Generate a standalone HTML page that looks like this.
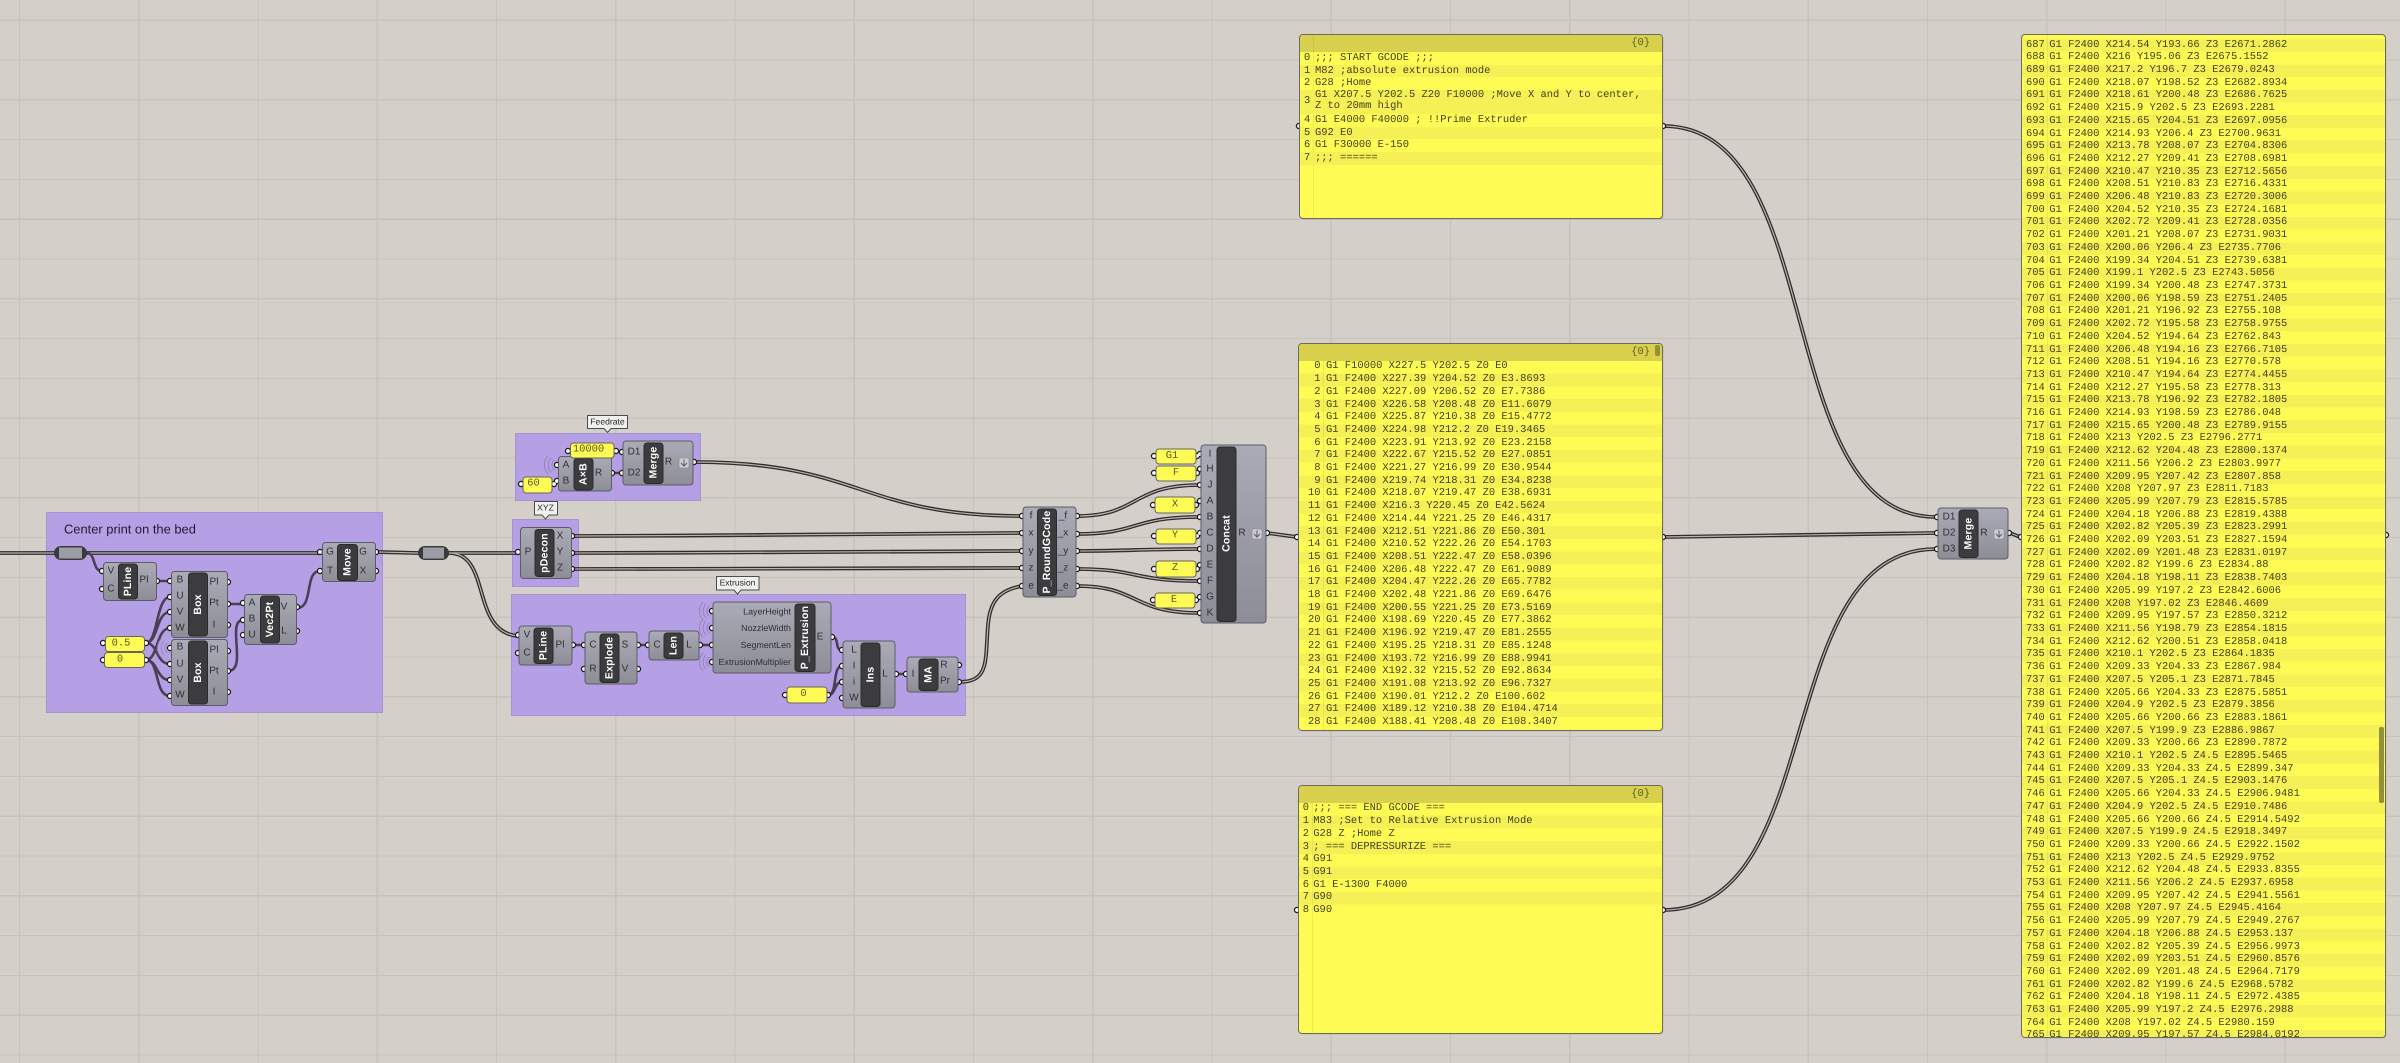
<!DOCTYPE html>
<html>
<head>
<meta charset="utf-8">
<style>
html,body{margin:0;padding:0;width:2400px;height:1063px;overflow:hidden;background:#d4d0c9}
#all{position:absolute;left:0;top:0;width:2400px;height:1063px;overflow:hidden;filter:blur(.3px);text-rendering:geometricPrecision}
.gv,.gh{position:absolute}
.gv{left:-99px;top:0;width:2600px;height:1063px;background:repeating-linear-gradient(90deg,transparent 0 118px,#c7c3bc 118px 119.25px)}
.gh{left:0;top:-18.6px;width:2400px;height:1100px;background:repeating-linear-gradient(180deg,transparent 0 38.6px,#c7c3bc 38.6px 39.8px)}
svg{position:absolute;left:0;top:0}
.grp{fill:#b39ae8;fill-opacity:.9;stroke:#a694cc;stroke-width:1}
.c{fill:url(#cg);stroke:#5c5c66;stroke-width:1}
.b{fill:#3c3c3e;stroke:#2a2a2c;stroke-width:1}
.n{font:bold 10.5px "Liberation Sans",sans-serif;fill:#fff;text-anchor:middle;dominant-baseline:central;letter-spacing:.2px}
.l{font:10px "Liberation Sans",sans-serif;fill:#2e2e32;text-anchor:middle;dominant-baseline:central}
.le{font:8.9px "Liberation Sans",sans-serif;fill:#2e2e32;text-anchor:end;dominant-baseline:central}
.y{fill:#fffb55;stroke:#66665a;stroke-width:1}
.m{font:10.45px "Liberation Mono",monospace;fill:#5c5c24;text-anchor:middle;dominant-baseline:central}
.tg{fill:#f0f0ee;stroke:#4c4c4c;stroke-width:1}
.tt{font:8.6px "Liberation Sans",sans-serif;fill:#2a2a2a;text-anchor:middle;dominant-baseline:central}
.btn{fill:#cbcbd0;stroke:#85858d;stroke-width:.6}
.p{position:absolute;background:#fffb55;box-shadow:0 0 0 1px #6b6b60,1px 1px 1px rgba(0,0,0,.3);border-radius:3px;overflow:hidden;font:10.45px/12.708px "Liberation Mono",monospace;color:#43431a}
.h{position:absolute;left:0;top:0;right:0;height:17px;background:#d9d04e}
.z{position:absolute;right:12px;top:2px;color:#5c5c24}
.s{position:absolute;left:0;right:0;bottom:0;background:repeating-linear-gradient(180deg,#fffb55 0 12.708px,#f5f055 12.708px 25.416px)}
.s2{position:absolute;left:0;right:0;bottom:0;background:repeating-linear-gradient(180deg,#f5f055 0 12.708px,#fffb55 12.708px 25.416px)}
.gut{position:absolute;left:0;top:0;bottom:0;border-right:1px solid rgba(120,120,40,.12)}
pre{position:absolute;margin:0;font:inherit;white-space:pre}
.r{position:relative;height:12.7px;white-space:pre}
.r b{position:absolute;font-weight:normal;left:4px;top:0}
.r i{position:absolute;font-style:normal;left:15px;top:0}
.d{background:#f5f055}
.sb{position:absolute;background:#94903a;border-radius:2px}
</style>
</head>
<body>
<div id="all">
<div class="gv"></div>
<div class="gh"></div>
<svg width="2400" height="1063" viewBox="0 0 2400 1063">
<defs>
<linearGradient id="cg" x1="0" y1="0" x2="0" y2="1"><stop offset="0" stop-color="#ababb7"/><stop offset="1" stop-color="#8d8d97"/></linearGradient>
<g id="w1">
<path d="M0 553H54"/><path d="M87 553H320"/><path d="M377 552L418 553"/><path d="M449 553H518"/>
<path d="M449 553C492 553 470 632 518 636"/>
<path d="M573 536C720 536 860 533 1022 533"/><path d="M573 553C720 553 860 551 1022 551"/><path d="M573 569C720 569 860 568 1022 568"/>
<path d="M694 462C860 462 860 516 1022 516"/>
<path d="M959 682C990 682 985 660 988 625C990 600 1000 590 1022 586"/>
<path d="M1077 516C1140 516 1130 485 1200 485"/><path d="M1077 534C1140 534 1130 517 1200 517"/><path d="M1077 551C1120 551 1150 549 1200 549"/>
<path d="M1077 569C1140 569 1130 581 1200 581"/><path d="M1077 586C1140 586 1130 613 1200 613"/>
<path d="M1267 533L1297 537"/>
<path d="M1663 126C1830 126 1770 517 1936 517"/><path d="M1663 537L1936 533"/><path d="M1663 910C1830 910 1770 549 1936 549"/>
<path d="M2010 533L2020 537"/>
</g>
<g id="w2">
<path d="M87 553C96 553 92 571 102 571"/>
<path d="M157 581H170"/>
<path d="M146 643C158 643 156 597 170 597"/><path d="M146 643C158 643 156 612 170 612"/><path d="M146 660C158 660 156 628 170 628"/>
<path d="M146 643C158 643 156 664 170 664"/><path d="M146 660C158 660 156 680 170 680"/><path d="M146 660C160 660 154 696 170 696"/>
<path d="M228 604H243"/><path d="M228 671C248 671 226 620 243 620"/><path d="M297 608C314 608 304 571 320 571"/>
<path d="M553 484L557 481"/><path d="M615 451L622 452"/><path d="M612 473H622"/>
<path d="M573 645H584"/><path d="M638 645H648"/><path d="M700 645H712"/><path d="M832 637C840 637 834 650 842 650"/>
<path d="M828 695C838 695 832 666 842 666"/><path d="M828 695C836 695 834 682 842 682"/><path d="M896 674H906"/>
</g>
<path id="k" d="M102 571h0M102 589h0M157 581h0M170 581h0M170 597h0M170 612h0M170 628h0M170 648h0M170 664h0M170 680h0M170 696h0M228 582h0M228 604h0M228 625h0M228 651h0M228 671h0M228 692h0M243 603h0M243 620h0M243 635h0M297 607h0M297 631h0M320 552h0M320 571h0M376 552h0M376 571h0M103 643h0M103 660h0M146 643h0M146 660h0M521 484h0M554 484h0M557 465h0M557 481h0M568 451h0M616 451h0M612 473h0M622 452h0M622 473h0M694 462h0M518 552h0M572 536h0M572 553h0M572 569h0M518 635h0M518 653h0M573 645h0M584 645h0M584 669h0M638 645h0M638 669h0M648 645h0M700 645h0M712 611h0M712 628h0M712 645h0M712 662h0M832 637h0M842 650h0M842 666h0M842 682h0M842 698h0M785 695h0M828 695h0M896 674h0M906 674h0M959 665h0M959 682h0M1022 516h0M1022 533h0M1022 551h0M1022 568h0M1022 586h0M1077 516h0M1077 534h0M1077 551h0M1077 569h0M1077 586h0M1154 456h0M1154 473h0M1197 456h0M1197 473h0M1153 505h0M1196 505h0M1154 536h0M1197 536h0M1154 569h0M1197 569h0M1153 600h0M1196 600h0M1200 454h0M1200 469h0M1200 485h0M1200 501h0M1200 517h0M1200 533h0M1200 549h0M1200 565h0M1200 581h0M1200 597h0M1200 613h0M1267 533h0M1297 537h0M1299 126h0M1663 126h0M1663 537h0M1297 910h0M1663 910h0M1937 517h0M1937 533h0M1937 549h0M2009 533h0M2021 537h0M2386 535h0"/>
</defs>

<!-- groups -->
<rect class="grp" x="46.5" y="512.5" width="336" height="200"/>
<rect class="grp" x="515.5" y="433.5" width="185" height="67"/>
<rect class="grp" x="512.5" y="519.5" width="66" height="67"/>
<rect class="grp" x="511.5" y="594.5" width="454" height="121"/>
<text x="64" y="529" style="font:12.9px 'Liberation Sans',sans-serif;fill:#221a30;dominant-baseline:central">Center print on the bed</text>

<!-- tags -->
<path class="tg" d="M587.5 415.5H627.5V428.5H611L607.5 432.5L604 428.5H587.5Z"/><text class="tt" x="607.5" y="421.5">Feedrate</text>
<path class="tg" d="M534.5 501.5H557.5V515H549L545.5 519L542 515H534.5Z"/><text class="tt" x="545.5" y="507.5">XYZ</text>
<path class="tg" d="M716.5 576.5H759V590H741L737.5 594L734 590H716.5Z"/><text class="tt" x="737.5" y="582.5">Extrusion</text>

<!-- wires -->
<g fill="none" stroke-linecap="round">
<use href="#w1" stroke="#2e2e2e" stroke-width="3.8"/>
<use href="#w1" stroke="#b8b6ad" stroke-width="1.2"/>
<use href="#w2" stroke="#4a4056" stroke-width="2.6"/>
<use href="#k" stroke="#1e1e1e" stroke-width="6.4"/>
<use href="#k" stroke="#fff" stroke-width="3.8"/>
<!-- hidden-wire arcs -->
<g stroke="#8f7fb0" stroke-width=".8">
<path d="M554 460a7 7 0 0 0 0 10M551 458a10 10 0 0 0 0 14M548 456a13 13 0 0 0 0 18"/>
<path d="M709 606a7 7 0 0 0 0 10M706 604a10 10 0 0 0 0 14M703 602a13 13 0 0 0 0 18"/>
<path d="M709 623a7 7 0 0 0 0 10M706 621a10 10 0 0 0 0 14M703 619a13 13 0 0 0 0 18"/>
<path d="M709 657a7 7 0 0 0 0 10M706 655a10 10 0 0 0 0 14M703 653a13 13 0 0 0 0 18"/>
<path d="M167 643a7 7 0 0 0 0 10M164 641a10 10 0 0 0 0 14M161 639a13 13 0 0 0 0 18"/>
</g>
</g>

<!-- relays -->
<rect x="54" y="546" width="33" height="14" rx="7" fill="#3a3a3c"/><rect x="59" y="547.5" width="23" height="11" fill="#9c9ca6"/>
<rect x="418" y="546" width="31" height="14" rx="7" fill="#3a3a3c"/><rect x="423" y="547.5" width="21" height="11" fill="#9c9ca6"/>

<!-- PLine 1 -->
<rect class="c" x="103.5" y="562.5" width="53" height="38" rx="3"/><rect class="b" x="118.5" y="564" width="19" height="35" rx="3"/>
<text class="n" transform="translate(128 581.5) rotate(-90)">PLine</text>
<text class="l" x="111" y="571">V</text><text class="l" x="111" y="589">C</text><text class="l" x="144" y="580">Pl</text>
<!-- Box 1 -->
<rect class="c" x="171.5" y="571.5" width="56" height="66" rx="3"/><rect class="b" x="188.5" y="573" width="19" height="63" rx="3"/>
<text class="n" transform="translate(198 604.5) rotate(-90)">Box</text>
<text class="l" x="180" y="580">B</text><text class="l" x="180" y="596">U</text><text class="l" x="180" y="612">V</text><text class="l" x="180" y="628">W</text>
<text class="l" x="214" y="582">Pl</text><text class="l" x="214" y="603">Pt</text><text class="l" x="214" y="625">I</text>
<!-- Box 2 -->
<rect class="c" x="171.5" y="639.5" width="56" height="66" rx="3"/><rect class="b" x="188.5" y="641" width="19" height="63" rx="3"/>
<text class="n" transform="translate(198 672.5) rotate(-90)">Box</text>
<text class="l" x="180" y="647">B</text><text class="l" x="180" y="664">U</text><text class="l" x="180" y="680">V</text><text class="l" x="180" y="695">W</text>
<text class="l" x="214" y="650">Pl</text><text class="l" x="214" y="671">Pt</text><text class="l" x="214" y="692">I</text>
<!-- Vec2Pt -->
<rect class="c" x="244.5" y="594.5" width="52" height="50" rx="3"/><rect class="b" x="260.5" y="596" width="19" height="47" rx="3"/>
<text class="n" transform="translate(270 619.5) rotate(-90)">Vec2Pt</text>
<text class="l" x="252" y="603">A</text><text class="l" x="252" y="619">B</text><text class="l" x="252" y="635">U</text>
<text class="l" x="284" y="607">V</text><text class="l" x="284" y="631">L</text>
<!-- Move -->
<rect class="c" x="322.5" y="542.5" width="53" height="39" rx="3"/><rect class="b" x="337.5" y="544.5" width="20" height="36" rx="3"/>
<text class="n" transform="translate(347.5 562) rotate(-90)">Move</text>
<text class="l" x="330" y="552">G</text><text class="l" x="330" y="571">T</text><text class="l" x="363" y="552">G</text><text class="l" x="363" y="571">X</text>
<!-- small panels left -->
<rect class="y" x="105.5" y="636.5" width="39" height="15" rx="3"/><text class="m" x="121" y="643.5">0.5</text>
<rect class="y" x="104.5" y="652.5" width="40" height="15" rx="3"/><text class="m" x="120" y="659.5">0</text>

<!-- AxB -->
<rect class="c" x="558.5" y="456.5" width="53" height="34.5" rx="3"/><rect class="b" x="574" y="458.5" width="19" height="31.5" rx="3"/>
<text class="n" transform="translate(583.5 474) rotate(-90)">A×B</text>
<text class="l" x="566" y="465">A</text><text class="l" x="566" y="481">B</text><text class="l" x="598.5" y="473">R</text>
<rect class="y" x="570.5" y="443" width="43.5" height="15" rx="3"/><text class="m" x="588.5" y="449.5">10000</text>
<rect class="y" x="523" y="477" width="29" height="16" rx="3"/><text class="m" x="533.5" y="483.5">60</text>
<!-- Merge 1 -->
<rect class="c" x="623" y="441" width="70" height="44" rx="3"/><rect class="b" x="644" y="443" width="19" height="40.5" rx="3"/>
<text class="n" transform="translate(653.5 462.5) rotate(-90)">Merge</text>
<text class="l" x="634" y="452">D1</text><text class="l" x="634" y="473">D2</text><text class="l" x="668.5" y="462">R</text>
<rect class="btn" x="679" y="458" width="10" height="10" rx="2"/><path d="M684 459.5V466M681 463l3 3 3-3" fill="none" stroke="#5a5a60" stroke-width="1"/>
<!-- pDecon -->
<rect class="c" x="520.5" y="527.5" width="51" height="51" rx="3"/><rect class="b" x="535" y="529.5" width="19" height="47" rx="3"/>
<text class="n" transform="translate(544.5 553) rotate(-90)">pDecon</text>
<text class="l" x="528" y="552">P</text><text class="l" x="560" y="536">X</text><text class="l" x="560" y="552">Y</text><text class="l" x="560" y="568">Z</text>
<!-- PLine 2 -->
<rect class="c" x="519" y="626" width="53" height="39" rx="3"/><rect class="b" x="534" y="628" width="19" height="35.5" rx="3"/>
<text class="n" transform="translate(543.5 645.5) rotate(-90)">PLine</text>
<text class="l" x="527" y="635">V</text><text class="l" x="527" y="653">C</text><text class="l" x="560" y="645">Pl</text>
<!-- Explode -->
<rect class="c" x="585" y="632" width="52" height="52" rx="3"/><rect class="b" x="600" y="634" width="19" height="48.5" rx="3"/>
<text class="n" transform="translate(609.5 658) rotate(-90)">Explode</text>
<text class="l" x="593" y="645">C</text><text class="l" x="593" y="669">R</text><text class="l" x="625" y="645">S</text><text class="l" x="625" y="669">V</text>
<!-- Len -->
<rect class="c" x="649" y="631" width="50" height="29" rx="3"/><rect class="b" x="664" y="633" width="19" height="25.5" rx="3"/>
<text class="n" transform="translate(673.5 645.5) rotate(-90)">Len</text>
<text class="l" x="657" y="645">C</text><text class="l" x="689" y="645">L</text>
<!-- P_Extrusion -->
<rect class="c" x="713" y="602" width="118" height="71" rx="3"/><rect class="b" x="795" y="604" width="20" height="67.5" rx="3"/>
<text class="n" transform="translate(805 637.5) rotate(-90)">P_Extrusion</text>
<text class="le" x="791" y="611.5">LayerHeight</text><text class="le" x="791" y="628">NozzleWidth</text><text class="le" x="791" y="645">SegmentLen</text><text class="le" x="791" y="662">ExtrusionMultiplier</text>
<text class="l" x="820" y="637">E</text>
<!-- Ins -->
<rect class="c" x="843" y="641" width="52" height="67" rx="3"/><rect class="b" x="861" y="643" width="19" height="63.5" rx="3"/>
<text class="n" transform="translate(870.5 674.5) rotate(-90)">Ins</text>
<text class="l" x="854" y="650">L</text><text class="l" x="854" y="666">I</text><text class="l" x="854" y="682">i</text><text class="l" x="854" y="698">W</text><text class="l" x="885" y="674">L</text>
<rect class="y" x="787" y="687" width="40" height="16" rx="3"/><text class="m" x="803.5" y="694">0</text>
<!-- MA -->
<rect class="c" x="907" y="657" width="51" height="35" rx="3"/><rect class="b" x="919" y="659" width="19" height="31.5" rx="3"/>
<text class="n" transform="translate(928.5 674.5) rotate(-90)">MA</text>
<text class="l" x="913" y="674">I</text><text class="l" x="944" y="665">R</text><text class="l" x="945" y="681">Pr</text>

<!-- P_RoundGCode -->
<rect class="c" x="1023" y="507" width="53" height="90" rx="3"/><rect class="b" x="1037.5" y="509" width="19" height="86.5" rx="3"/>
<text class="n" transform="translate(1047 552) rotate(-90)">P_RoundGCode</text>
<text class="l" x="1031" y="516">f</text><text class="l" x="1031" y="533">x</text><text class="l" x="1031" y="551">y</text><text class="l" x="1031" y="568">z</text><text class="l" x="1031" y="586">e</text>
<text class="l" x="1063" y="516">_f</text><text class="l" x="1063" y="533">_x</text><text class="l" x="1063" y="551">_y</text><text class="l" x="1063" y="568">_z</text><text class="l" x="1063" y="586">_e</text>

<!-- Concat small panels -->
<rect class="y" x="1156" y="449" width="40" height="15" rx="3"/><text class="m" x="1172" y="456">G1</text>
<rect class="y" x="1156" y="466" width="40" height="15" rx="3"/><text class="m" x="1176" y="473">F</text>
<rect class="y" x="1155" y="497" width="40" height="16" rx="3"/><text class="m" x="1175" y="504.5">X</text>
<rect class="y" x="1156" y="529" width="40" height="15" rx="3"/><text class="m" x="1175" y="535.5">Y</text>
<rect class="y" x="1156" y="561" width="40" height="16" rx="3"/><text class="m" x="1175" y="568">Z</text>
<rect class="y" x="1155" y="593" width="40" height="15" rx="3"/><text class="m" x="1174" y="600">E</text>
<!-- Concat -->
<rect class="c" x="1201" y="445" width="65" height="178" rx="3"/><rect class="b" x="1217" y="447" width="19" height="174.5" rx="3"/>
<text class="n" transform="translate(1226.5 533.5) rotate(-90)">Concat</text>
<text class="l" x="1210" y="454">I</text><text class="l" x="1210" y="469">H</text><text class="l" x="1210" y="485">J</text><text class="l" x="1210" y="501">A</text><text class="l" x="1210" y="517">B</text><text class="l" x="1210" y="533">C</text><text class="l" x="1210" y="549">D</text><text class="l" x="1210" y="565">E</text><text class="l" x="1210" y="581">F</text><text class="l" x="1210" y="597">G</text><text class="l" x="1210" y="613">K</text>
<text class="l" x="1242" y="533">R</text>
<rect class="btn" x="1252" y="529" width="10" height="10" rx="2"/><path d="M1257 530.5V537M1254 534l3 3 3-3" fill="none" stroke="#5a5a60" stroke-width="1"/>

<!-- Merge 2 -->
<rect class="c" x="1938" y="508" width="70" height="51" rx="3"/><rect class="b" x="1959" y="510" width="19" height="47.5" rx="3"/>
<text class="n" transform="translate(1968.5 533.5) rotate(-90)">Merge</text>
<text class="l" x="1949" y="517">D1</text><text class="l" x="1949" y="533">D2</text><text class="l" x="1949" y="549">D3</text><text class="l" x="1984" y="533">R</text>
<rect class="btn" x="1994" y="529" width="10" height="10" rx="2"/><path d="M1999 530.5V537M1996 534l3 3 3-3" fill="none" stroke="#5a5a60" stroke-width="1"/>
</svg>

<!-- Panel 1 -->
<div class="p" style="left:1300px;top:35px;width:362px;height:183px">
<div style="height:17px;background:#d9d04e;position:relative"><span class="z" style="top:2px">{0}</span></div>
<div class="gut" style="width:12.5px"></div>
<div class="r"><b>0</b><i>;;; START GCODE ;;;</i></div>
<div class="r d"><b>1</b><i>M82 ;absolute extrusion mode</i></div>
<div class="r"><b>2</b><i>G28 ;Home</i></div>
<div class="r d" style="height:24px;line-height:11.4px"><b style="top:5.5px">3</b><i>G1 X207.5 Y202.5 Z20 F10000 ;Move X and Y to center,
Z to 20mm high</i></div>
<div class="r"><b>4</b><i>G1 E4000 F40000 ; !!Prime Extruder</i></div>
<div class="r d"><b>5</b><i>G92 E0</i></div>
<div class="r"><b>6</b><i>G1 F30000 E-150</i></div>
<div class="r d"><b>7</b><i>;;; ======</i></div>
</div>

<!-- Panel 2 -->
<div class="p" style="left:1299px;top:344px;width:363px;height:386px">
<div class="s" style="top:17px"></div>
<div class="h"><span class="z">{0}</span></div>
<div class="gut" style="width:24px;top:17px"></div>
<pre style="left:0;top:16.4px;width:21.5px;text-align:right">0
1
2
3
4
5
6
7
8
9
10
11
12
13
14
15
16
17
18
19
20
21
22
23
24
25
26
27
28</pre>
<pre style="left:27px;top:16.4px">G1 F10000 X227.5 Y202.5 Z0 E0
G1 F2400 X227.39 Y204.52 Z0 E3.8693
G1 F2400 X227.09 Y206.52 Z0 E7.7386
G1 F2400 X226.58 Y208.48 Z0 E11.6079
G1 F2400 X225.87 Y210.38 Z0 E15.4772
G1 F2400 X224.98 Y212.2 Z0 E19.3465
G1 F2400 X223.91 Y213.92 Z0 E23.2158
G1 F2400 X222.67 Y215.52 Z0 E27.0851
G1 F2400 X221.27 Y216.99 Z0 E30.9544
G1 F2400 X219.74 Y218.31 Z0 E34.8238
G1 F2400 X218.07 Y219.47 Z0 E38.6931
G1 F2400 X216.3 Y220.45 Z0 E42.5624
G1 F2400 X214.44 Y221.25 Z0 E46.4317
G1 F2400 X212.51 Y221.86 Z0 E50.301
G1 F2400 X210.52 Y222.26 Z0 E54.1703
G1 F2400 X208.51 Y222.47 Z0 E58.0396
G1 F2400 X206.48 Y222.47 Z0 E61.9089
G1 F2400 X204.47 Y222.26 Z0 E65.7782
G1 F2400 X202.48 Y221.86 Z0 E69.6476
G1 F2400 X200.55 Y221.25 Z0 E73.5169
G1 F2400 X198.69 Y220.45 Z0 E77.3862
G1 F2400 X196.92 Y219.47 Z0 E81.2555
G1 F2400 X195.25 Y218.31 Z0 E85.1248
G1 F2400 X193.72 Y216.99 Z0 E88.9941
G1 F2400 X192.32 Y215.52 Z0 E92.8634
G1 F2400 X191.08 Y213.92 Z0 E96.7327
G1 F2400 X190.01 Y212.2 Z0 E100.602
G1 F2400 X189.12 Y210.38 Z0 E104.4714
G1 F2400 X188.41 Y208.48 Z0 E108.3407</pre>
<div class="sb" style="left:356px;top:1px;width:5px;height:11px"></div>
</div>

<!-- Panel 3 -->
<div class="p" style="left:1299px;top:786px;width:363px;height:247px">
<div class="s" style="top:17px;bottom:auto;height:114.4px"></div>
<div class="h"><span class="z">{0}</span></div>
<div class="gut" style="width:12.5px;top:17px"></div>
<pre style="left:3.7px;top:16.4px">0
1
2
3
4
5
6
7
8</pre>
<pre style="left:14.3px;top:16.4px">;;; === END GCODE ===
M83 ;Set to Relative Extrusion Mode
G28 Z ;Home Z
; === DEPRESSURIZE ===
G91
G91
G1 E-1300 F4000
G90
G90</pre>
</div>

<!-- Panel 4 -->
<div class="p" style="left:2022px;top:35px;width:363px;height:1002px">
<div class="s2" style="top:3.65px"></div>
<div class="gut" style="width:24.5px"></div>
<pre style="left:4px;top:3.65px">687
688
689
690
691
692
693
694
695
696
697
698
699
700
701
702
703
704
705
706
707
708
709
710
711
712
713
714
715
716
717
718
719
720
721
722
723
724
725
726
727
728
729
730
731
732
733
734
735
736
737
738
739
740
741
742
743
744
745
746
747
748
749
750
751
752
753
754
755
756
757
758
759
760
761
762
763
764
765</pre>
<pre style="left:27.3px;top:3.65px">G1 F2400 X214.54 Y193.66 Z3 E2671.2862
G1 F2400 X216 Y195.06 Z3 E2675.1552
G1 F2400 X217.2 Y196.7 Z3 E2679.0243
G1 F2400 X218.07 Y198.52 Z3 E2682.8934
G1 F2400 X218.61 Y200.48 Z3 E2686.7625
G1 F2400 X215.9 Y202.5 Z3 E2693.2281
G1 F2400 X215.65 Y204.51 Z3 E2697.0956
G1 F2400 X214.93 Y206.4 Z3 E2700.9631
G1 F2400 X213.78 Y208.07 Z3 E2704.8306
G1 F2400 X212.27 Y209.41 Z3 E2708.6981
G1 F2400 X210.47 Y210.35 Z3 E2712.5656
G1 F2400 X208.51 Y210.83 Z3 E2716.4331
G1 F2400 X206.48 Y210.83 Z3 E2720.3006
G1 F2400 X204.52 Y210.35 Z3 E2724.1681
G1 F2400 X202.72 Y209.41 Z3 E2728.0356
G1 F2400 X201.21 Y208.07 Z3 E2731.9031
G1 F2400 X200.06 Y206.4 Z3 E2735.7706
G1 F2400 X199.34 Y204.51 Z3 E2739.6381
G1 F2400 X199.1 Y202.5 Z3 E2743.5056
G1 F2400 X199.34 Y200.48 Z3 E2747.3731
G1 F2400 X200.06 Y198.59 Z3 E2751.2405
G1 F2400 X201.21 Y196.92 Z3 E2755.108
G1 F2400 X202.72 Y195.58 Z3 E2758.9755
G1 F2400 X204.52 Y194.64 Z3 E2762.843
G1 F2400 X206.48 Y194.16 Z3 E2766.7105
G1 F2400 X208.51 Y194.16 Z3 E2770.578
G1 F2400 X210.47 Y194.64 Z3 E2774.4455
G1 F2400 X212.27 Y195.58 Z3 E2778.313
G1 F2400 X213.78 Y196.92 Z3 E2782.1805
G1 F2400 X214.93 Y198.59 Z3 E2786.048
G1 F2400 X215.65 Y200.48 Z3 E2789.9155
G1 F2400 X213 Y202.5 Z3 E2796.2771
G1 F2400 X212.62 Y204.48 Z3 E2800.1374
G1 F2400 X211.56 Y206.2 Z3 E2803.9977
G1 F2400 X209.95 Y207.42 Z3 E2807.858
G1 F2400 X208 Y207.97 Z3 E2811.7183
G1 F2400 X205.99 Y207.79 Z3 E2815.5785
G1 F2400 X204.18 Y206.88 Z3 E2819.4388
G1 F2400 X202.82 Y205.39 Z3 E2823.2991
G1 F2400 X202.09 Y203.51 Z3 E2827.1594
G1 F2400 X202.09 Y201.48 Z3 E2831.0197
G1 F2400 X202.82 Y199.6 Z3 E2834.88
G1 F2400 X204.18 Y198.11 Z3 E2838.7403
G1 F2400 X205.99 Y197.2 Z3 E2842.6006
G1 F2400 X208 Y197.02 Z3 E2846.4609
G1 F2400 X209.95 Y197.57 Z3 E2850.3212
G1 F2400 X211.56 Y198.79 Z3 E2854.1815
G1 F2400 X212.62 Y200.51 Z3 E2858.0418
G1 F2400 X210.1 Y202.5 Z3 E2864.1835
G1 F2400 X209.33 Y204.33 Z3 E2867.984
G1 F2400 X207.5 Y205.1 Z3 E2871.7845
G1 F2400 X205.66 Y204.33 Z3 E2875.5851
G1 F2400 X204.9 Y202.5 Z3 E2879.3856
G1 F2400 X205.66 Y200.66 Z3 E2883.1861
G1 F2400 X207.5 Y199.9 Z3 E2886.9867
G1 F2400 X209.33 Y200.66 Z3 E2890.7872
G1 F2400 X210.1 Y202.5 Z4.5 E2895.5465
G1 F2400 X209.33 Y204.33 Z4.5 E2899.347
G1 F2400 X207.5 Y205.1 Z4.5 E2903.1476
G1 F2400 X205.66 Y204.33 Z4.5 E2906.9481
G1 F2400 X204.9 Y202.5 Z4.5 E2910.7486
G1 F2400 X205.66 Y200.66 Z4.5 E2914.5492
G1 F2400 X207.5 Y199.9 Z4.5 E2918.3497
G1 F2400 X209.33 Y200.66 Z4.5 E2922.1502
G1 F2400 X213 Y202.5 Z4.5 E2929.9752
G1 F2400 X212.62 Y204.48 Z4.5 E2933.8355
G1 F2400 X211.56 Y206.2 Z4.5 E2937.6958
G1 F2400 X209.95 Y207.42 Z4.5 E2941.5561
G1 F2400 X208 Y207.97 Z4.5 E2945.4164
G1 F2400 X205.99 Y207.79 Z4.5 E2949.2767
G1 F2400 X204.18 Y206.88 Z4.5 E2953.137
G1 F2400 X202.82 Y205.39 Z4.5 E2956.9973
G1 F2400 X202.09 Y203.51 Z4.5 E2960.8576
G1 F2400 X202.09 Y201.48 Z4.5 E2964.7179
G1 F2400 X202.82 Y199.6 Z4.5 E2968.5782
G1 F2400 X204.18 Y198.11 Z4.5 E2972.4385
G1 F2400 X205.99 Y197.2 Z4.5 E2976.2988
G1 F2400 X208 Y197.02 Z4.5 E2980.159
G1 F2400 X209.95 Y197.57 Z4.5 E2984.0192</pre>
<div class="sb" style="left:357px;top:692px;width:5px;height:76px"></div>
</div>
</div>
</body>
</html>
